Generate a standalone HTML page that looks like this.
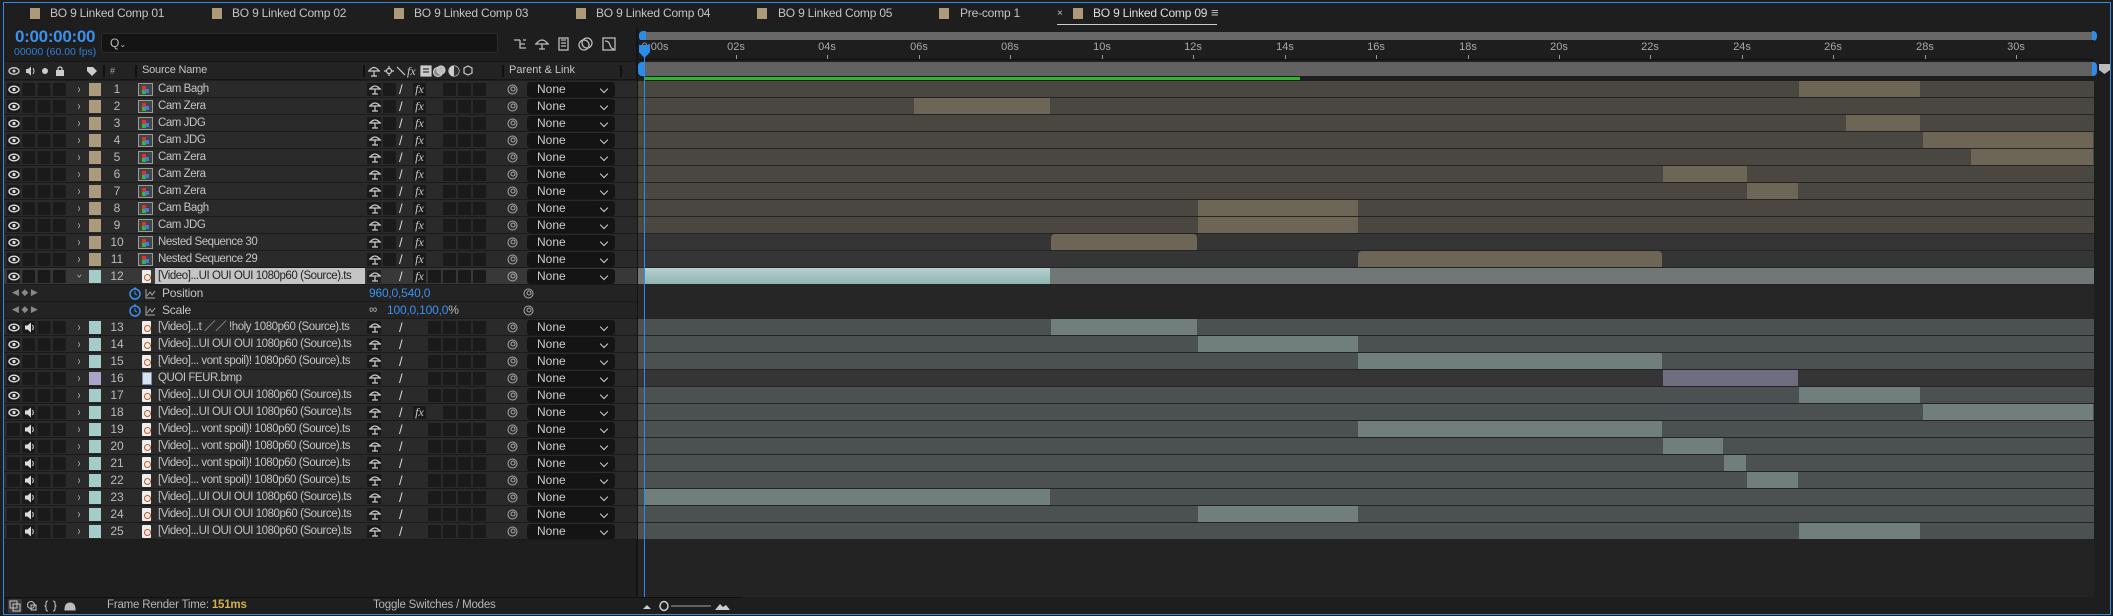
<!DOCTYPE html>
<html><head><meta charset="utf-8"><style>
*{margin:0;padding:0;box-sizing:border-box}
body{width:2113px;height:616px;background:#1e1e1e;position:relative;overflow:hidden;font-family:"Liberation Sans",sans-serif;color:#bdbdbd;font-size:12px}
.a{position:absolute}
.tab{position:absolute;top:6px;font-size:12px;color:#c4c4c4;letter-spacing:-0.2px;white-space:nowrap}
.tsq{position:absolute;top:8px;width:10px;height:11px;background:#ac9a7a}
.r{position:absolute;left:0;width:2094px;height:17px}
.L{position:absolute;left:4px;width:633px;height:17px;background:#2a2a2a;border-bottom:1px solid #1a1a1a}
.T{position:absolute;left:638px;width:1456px;height:17px;border-bottom:1px solid #242424}
.tan{background:#4a4640}.tl{background:#4b5151}.dk{background:#353535}
.b{position:absolute;top:0;height:16px}
.tb{background:#6d6555}.eb{background:#707e7c}
.cells{position:absolute;left:3px;top:2px;width:59px;height:13px;background:linear-gradient(90deg,#1a1a1a 13px,transparent 13px) 0 0/15.3px 13px repeat-x}
.sw3{position:absolute;left:439px;top:2px;width:43px;height:13px;background:linear-gradient(90deg,#1a1a1a 13px,transparent 13px) 0 0/15px 13px repeat-x}
.sw4{position:absolute;left:424px;top:2px;width:58px;height:13px;background:linear-gradient(90deg,#1a1a1a 13px,transparent 13px) 0 0/15px 13px repeat-x}
.cl{position:absolute;top:2px;width:13px;height:13px;background:#1a1a1a;border-radius:1px}
.eye{position:absolute;left:4px;top:4px}
.spk{position:absolute;left:20px;top:3px}
.ar{position:absolute;left:73px;top:1px;font-size:12px;color:#bbb;transform:scaleX(0.7)}
.lb{position:absolute;left:85px;top:2px;width:12px;height:13px}
.lt{background:#ab9a7b}.le{background:#a5ccc8}.lp{background:#a8a5c8}
.n{position:absolute;left:102px;width:22px;text-align:center;top:1px;color:#bbb}
.ci{position:absolute;left:134px;top:2px;width:15px;height:13px;border:1px solid #9a9a9a;background:#444}
.ci:before{content:"";position:absolute;left:3px;top:2px;width:4px;height:4px;background:#d33}
.ci:after{content:"";position:absolute;left:6px;top:5px;width:4px;height:4px;background:#3a7de0;box-shadow:-3px 1px 0 #3b3}
.vi{position:absolute;left:138px;top:2px;width:9px;height:13px;background:#eee;border-radius:1px}
.vi:after{content:"";position:absolute;left:2px;top:4px;width:5px;height:5px;border-radius:50%;border:1.5px solid #c75a28}
.bi{position:absolute;left:138px;top:2px;width:10px;height:13px;background:#d8e4ee;border:1px solid #7a8fb0}
.nm{position:absolute;left:154px;top:0;line-height:17px;font-size:11.5px;letter-spacing:-0.45px;white-space:nowrap;color:#c4c4c4}
.shy{position:absolute;left:363px;top:2px;width:14px;height:13px;background:#1a1a1a}
.sl{position:absolute;left:395px;top:1px;color:#ddd;font-size:13px}
.fx{position:absolute;left:409px;top:2px;width:13px;height:13px;background:#1a1a1a;color:#ccc;font-style:italic;font-family:"Liberation Serif",serif;font-size:12px;line-height:12px;text-align:center}
.spi{position:absolute;left:503px;top:3px}
.dd{position:absolute;left:523px;top:1px;width:88px;height:15px;background:#141414;border-radius:3px;color:#ccc;padding-left:10px;line-height:15px}
.dd:after{content:"";position:absolute;right:8px;top:4px;width:5px;height:5px;border-right:1.5px solid #ccc;border-bottom:1.5px solid #ccc;transform:rotate(45deg)}
.rl{position:absolute;top:41px;font-size:11px;color:#aaa;transform:translateX(-50%)}
.tk{position:absolute;top:55px;width:1px;height:4px;background:#999}
</style></head><body>
<div class="a" style="left:0;top:0;width:2113px;height:2px;background:#1e1e1e"></div>
<div class="a" style="left:3px;top:2px;width:2108px;height:1px;background:#2d8ceb"></div>
<div class="a" style="left:3px;top:2px;width:1px;height:613px;background:#2d8ceb"></div>
<div class="a" style="left:3px;top:614px;width:2108px;height:1px;background:#2d8ceb"></div>
<div class="a" style="left:2110px;top:2px;width:1px;height:613px;background:#2d8ceb"></div>

<div class="tsq" style="left:30px"></div><div class="tab" style="left:50px">BO 9 Linked Comp 01</div>
<div class="tsq" style="left:212px"></div><div class="tab" style="left:232px">BO 9 Linked Comp 02</div>
<div class="tsq" style="left:394px"></div><div class="tab" style="left:414px">BO 9 Linked Comp 03</div>
<div class="tsq" style="left:576px"></div><div class="tab" style="left:596px">BO 9 Linked Comp 04</div>
<div class="tsq" style="left:757px"></div><div class="tab" style="left:778px">BO 9 Linked Comp 05</div>
<div class="tsq" style="left:939px"></div><div class="tab" style="left:960px">Pre-comp 1</div>
<div class="tab" style="left:1057px;font-size:10px;top:8px">×</div>
<div class="tsq" style="left:1073px"></div><div class="tab" style="left:1093px;color:#ddd">BO 9 Linked Comp 09</div>
<div class="tab" style="left:1211px;font-size:13px;top:5px">≡</div>
<div class="a" style="left:1057px;top:24px;width:160px;height:1px;background:#ccc"></div>

<div class="a" style="left:15px;top:27px;font-size:17px;font-weight:bold;color:#3b91ee;letter-spacing:-0.3px">0:00:00:00</div>
<div class="a" style="left:14px;top:46px;font-size:10.5px;color:#2f7fd6">00000 (60.00 fps)</div>
<div class="a" style="left:101px;top:33px;width:397px;height:20px;background:#141414;border:1px solid #2c2c2c;border-radius:3px"></div>
<div class="a" style="left:110px;top:36px;font-size:12px;color:#bbb">Q<span style="font-size:8px">⌄</span></div>
<svg class="a" style="left:512px;top:36px" width="120" height="16" viewBox="0 0 120 16" fill="none" stroke="#bbb" stroke-width="1.3">
<path d="M2 4h6M8 4v8h6M8 8h5M11 4h3"/>
<path d="M24 8q6-8 12 0zM23 8h14M30 8v5M27 13h6"/>
<rect x="47" y="2" width="9" height="12"/><path d="M49 4h5M49 7h5M49 10h5"/>
<circle cx="72" cy="9" r="5"/><circle cx="75" cy="7" r="5"/>
<rect x="91" y="2" width="12" height="12"/><path d="M93 5q4 0 5 4t4 4"/>
</svg>

<div class="a" style="left:4px;top:61px;width:633px;height:19px;background:#232323;border-top:1px solid #171717;border-bottom:1px solid #171717"></div>
<svg class="a" style="left:8px;top:66px" width="90" height="12" fill="#ccc" stroke="#ccc">
<ellipse cx="6" cy="5" rx="5" ry="3.3" fill="none" stroke-width="1.3"/><circle cx="6" cy="5" r="1.5" stroke="none"/>
<path d="M18 3h2l3-2.5v9L20 7h-2z" stroke="none"/><path d="M25 2q2 3 0 6" fill="none"/>
<circle cx="37" cy="5" r="3" stroke="none"/>
<rect x="48" y="4" width="8" height="6" stroke="none"/><path d="M50 4v-2q2-2 4 0v2" fill="none" stroke-width="1.2"/>
<path d="M79 1h6l4 4-5 5-5-5z" stroke="none"/>
</svg>
<div class="a" style="left:103px;top:65px;width:2px;height:12px;background:#111"></div>
<div class="a" style="left:110px;top:66px;font-size:9px;color:#aaa">#</div>
<div class="a" style="left:135px;top:65px;width:2px;height:12px;background:#111"></div>
<div class="a" style="left:142px;top:64px;font-size:11px;color:#c4c4c4;letter-spacing:-0.2px">Source Name</div>
<div class="a" style="left:363px;top:65px;width:2px;height:12px;background:#111"></div>
<svg class="a" style="left:368px;top:65px" width="120" height="13" fill="none" stroke="#ccc" stroke-width="1.2">
<path d="M1 6q5-7 10 0zM0 6h12M6 6v5M3 11h6"/>
<circle cx="21" cy="6" r="2.5"/><path d="M21 1v2M21 9v2M16 6h2M24 6h2"/>
<path d="M29 2l8 8"/>
<text x="39" y="10" fill="#ccc" stroke="none" font-size="12" font-style="italic" font-family="Liberation Serif">fx</text>
<rect x="53" y="1" width="10" height="10" fill="#ccc"/><path d="M55 4h6M55 7h6" stroke="#333"/>
<circle cx="70" cy="7" r="4.5" fill="#888"/><circle cx="73" cy="5" r="4" fill="#bbb"/>
<circle cx="86" cy="6" r="5" fill="#ccc"/><path d="M86 1a5 5 0 0 1 0 10z" fill="#333" stroke="none"/>
<path d="M96 3l4-2 4 2v5l-4 2-4-2z"/>
</svg>
<div class="a" style="left:502px;top:65px;width:2px;height:12px;background:#111"></div>
<div class="a" style="left:509px;top:64px;font-size:11px;color:#c4c4c4">Parent &amp; Link</div>
<div class="a" style="left:620px;top:65px;width:2px;height:12px;background:#111"></div>

<div class="a" style="left:636px;top:28px;width:2px;height:569px;background:#141414"></div>

<div class="a" style="left:644px;top:32px;width:1450px;height:8px;background:#686868"></div>
<div class="a" style="left:639px;top:31px;width:7px;height:10px;background:#2d8ceb;border-radius:4px 0 0 4px"></div>
<div class="a" style="left:2092px;top:31px;width:5px;height:10px;background:#2d8ceb;border-radius:0 4px 4px 0"></div>
<div class="a" style="left:638px;top:40px;width:1456px;height:20px;background:#1e1e1e;border-bottom:1px solid #111"></div>
<div class="rl" style="left:655px">0:00s</div>
<div class="rl" style="left:736px">02s</div><div class="tk" style="left:736px"></div>
<div class="rl" style="left:827px">04s</div><div class="tk" style="left:827px"></div>
<div class="rl" style="left:919px">06s</div><div class="tk" style="left:919px"></div>
<div class="rl" style="left:1010px">08s</div><div class="tk" style="left:1010px"></div>
<div class="rl" style="left:1102px">10s</div><div class="tk" style="left:1102px"></div>
<div class="rl" style="left:1193px">12s</div><div class="tk" style="left:1193px"></div>
<div class="rl" style="left:1285px">14s</div><div class="tk" style="left:1285px"></div>
<div class="rl" style="left:1376px">16s</div><div class="tk" style="left:1376px"></div>
<div class="rl" style="left:1468px">18s</div><div class="tk" style="left:1468px"></div>
<div class="rl" style="left:1559px">20s</div><div class="tk" style="left:1559px"></div>
<div class="rl" style="left:1650px">22s</div><div class="tk" style="left:1650px"></div>
<div class="rl" style="left:1742px">24s</div><div class="tk" style="left:1742px"></div>
<div class="rl" style="left:1833px">26s</div><div class="tk" style="left:1833px"></div>
<div class="rl" style="left:1925px">28s</div><div class="tk" style="left:1925px"></div>
<div class="rl" style="left:2016px">30s</div><div class="tk" style="left:2016px"></div>
<div class="a" style="left:638px;top:61px;width:1456px;height:19px;background:#1e1e1e"></div>
<div class="a" style="left:644px;top:62px;width:1450px;height:14px;background:#626262"></div>
<div class="a" style="left:638px;top:62px;width:6px;height:14px;background:#2d8ceb;border-radius:4px 0 0 4px"></div>
<div class="a" style="left:2092px;top:62px;width:5px;height:14px;background:#2d8ceb;border-radius:0 4px 4px 0"></div>
<div class="a" style="left:644px;top:77px;width:656px;height:3px;background:#2db52d"></div>
<div class="a" style="left:2099px;top:64px;width:11px;height:10px;background:#bbb;clip-path:polygon(0 0,100% 0,100% 60%,50% 100%,0 60%)"></div>

<div class="r" style="top:81px"><div class="L"><div class="cells"></div><svg class="eye" width="12" height="9"><ellipse cx="6" cy="4.5" rx="5" ry="3.3" fill="none" stroke="#ddd" stroke-width="1.4"/><circle cx="6" cy="4.5" r="1.6" fill="#ddd"/></svg><span class="ar">›</span><i class="lb lt"></i><span class="n">1</span><i class="ci"></i><span class="nm">Cam Bagh</span><i class="shy"></i><i class="cl" style="left:379px"></i><span class="sl">/</span><i class="fx">fx</i><i class="sw3"></i><svg class="spi" width="11" height="11"><circle cx="5.5" cy="5.5" r="4.5" fill="none" stroke="#aaa"/><circle cx="6" cy="5" r="2" fill="none" stroke="#aaa"/></svg><div class="dd">None</div></div><div class="T tan"><i class="b tb" style="left:1161px;width:121px"></i></div></div>
<div class="r" style="top:98px"><div class="L"><div class="cells"></div><svg class="eye" width="12" height="9"><ellipse cx="6" cy="4.5" rx="5" ry="3.3" fill="none" stroke="#ddd" stroke-width="1.4"/><circle cx="6" cy="4.5" r="1.6" fill="#ddd"/></svg><span class="ar">›</span><i class="lb lt"></i><span class="n">2</span><i class="ci"></i><span class="nm">Cam Zera</span><i class="shy"></i><i class="cl" style="left:379px"></i><span class="sl">/</span><i class="fx">fx</i><i class="sw3"></i><svg class="spi" width="11" height="11"><circle cx="5.5" cy="5.5" r="4.5" fill="none" stroke="#aaa"/><circle cx="6" cy="5" r="2" fill="none" stroke="#aaa"/></svg><div class="dd">None</div></div><div class="T tan"><i class="b tb" style="left:276px;width:136px"></i></div></div>
<div class="r" style="top:115px"><div class="L"><div class="cells"></div><svg class="eye" width="12" height="9"><ellipse cx="6" cy="4.5" rx="5" ry="3.3" fill="none" stroke="#ddd" stroke-width="1.4"/><circle cx="6" cy="4.5" r="1.6" fill="#ddd"/></svg><span class="ar">›</span><i class="lb lt"></i><span class="n">3</span><i class="ci"></i><span class="nm">Cam JDG</span><i class="shy"></i><i class="cl" style="left:379px"></i><span class="sl">/</span><i class="fx">fx</i><i class="sw3"></i><svg class="spi" width="11" height="11"><circle cx="5.5" cy="5.5" r="4.5" fill="none" stroke="#aaa"/><circle cx="6" cy="5" r="2" fill="none" stroke="#aaa"/></svg><div class="dd">None</div></div><div class="T tan"><i class="b tb" style="left:1208px;width:74px"></i></div></div>
<div class="r" style="top:132px"><div class="L"><div class="cells"></div><svg class="eye" width="12" height="9"><ellipse cx="6" cy="4.5" rx="5" ry="3.3" fill="none" stroke="#ddd" stroke-width="1.4"/><circle cx="6" cy="4.5" r="1.6" fill="#ddd"/></svg><span class="ar">›</span><i class="lb lt"></i><span class="n">4</span><i class="ci"></i><span class="nm">Cam JDG</span><i class="shy"></i><i class="cl" style="left:379px"></i><span class="sl">/</span><i class="fx">fx</i><i class="sw3"></i><svg class="spi" width="11" height="11"><circle cx="5.5" cy="5.5" r="4.5" fill="none" stroke="#aaa"/><circle cx="6" cy="5" r="2" fill="none" stroke="#aaa"/></svg><div class="dd">None</div></div><div class="T tan"><i class="b tb" style="left:1285px;width:170px"></i></div></div>
<div class="r" style="top:149px"><div class="L"><div class="cells"></div><svg class="eye" width="12" height="9"><ellipse cx="6" cy="4.5" rx="5" ry="3.3" fill="none" stroke="#ddd" stroke-width="1.4"/><circle cx="6" cy="4.5" r="1.6" fill="#ddd"/></svg><span class="ar">›</span><i class="lb lt"></i><span class="n">5</span><i class="ci"></i><span class="nm">Cam Zera</span><i class="shy"></i><i class="cl" style="left:379px"></i><span class="sl">/</span><i class="fx">fx</i><i class="sw3"></i><svg class="spi" width="11" height="11"><circle cx="5.5" cy="5.5" r="4.5" fill="none" stroke="#aaa"/><circle cx="6" cy="5" r="2" fill="none" stroke="#aaa"/></svg><div class="dd">None</div></div><div class="T tan"><i class="b tb" style="left:1333px;width:122px"></i></div></div>
<div class="r" style="top:166px"><div class="L"><div class="cells"></div><svg class="eye" width="12" height="9"><ellipse cx="6" cy="4.5" rx="5" ry="3.3" fill="none" stroke="#ddd" stroke-width="1.4"/><circle cx="6" cy="4.5" r="1.6" fill="#ddd"/></svg><span class="ar">›</span><i class="lb lt"></i><span class="n">6</span><i class="ci"></i><span class="nm">Cam Zera</span><i class="shy"></i><i class="cl" style="left:379px"></i><span class="sl">/</span><i class="fx">fx</i><i class="sw3"></i><svg class="spi" width="11" height="11"><circle cx="5.5" cy="5.5" r="4.5" fill="none" stroke="#aaa"/><circle cx="6" cy="5" r="2" fill="none" stroke="#aaa"/></svg><div class="dd">None</div></div><div class="T tan"><i class="b tb" style="left:1025px;width:84px"></i></div></div>
<div class="r" style="top:183px"><div class="L"><div class="cells"></div><svg class="eye" width="12" height="9"><ellipse cx="6" cy="4.5" rx="5" ry="3.3" fill="none" stroke="#ddd" stroke-width="1.4"/><circle cx="6" cy="4.5" r="1.6" fill="#ddd"/></svg><span class="ar">›</span><i class="lb lt"></i><span class="n">7</span><i class="ci"></i><span class="nm">Cam Zera</span><i class="shy"></i><i class="cl" style="left:379px"></i><span class="sl">/</span><i class="fx">fx</i><i class="sw3"></i><svg class="spi" width="11" height="11"><circle cx="5.5" cy="5.5" r="4.5" fill="none" stroke="#aaa"/><circle cx="6" cy="5" r="2" fill="none" stroke="#aaa"/></svg><div class="dd">None</div></div><div class="T tan"><i class="b tb" style="left:1109px;width:51px"></i></div></div>
<div class="r" style="top:200px"><div class="L"><div class="cells"></div><svg class="eye" width="12" height="9"><ellipse cx="6" cy="4.5" rx="5" ry="3.3" fill="none" stroke="#ddd" stroke-width="1.4"/><circle cx="6" cy="4.5" r="1.6" fill="#ddd"/></svg><span class="ar">›</span><i class="lb lt"></i><span class="n">8</span><i class="ci"></i><span class="nm">Cam Bagh</span><i class="shy"></i><i class="cl" style="left:379px"></i><span class="sl">/</span><i class="fx">fx</i><i class="sw3"></i><svg class="spi" width="11" height="11"><circle cx="5.5" cy="5.5" r="4.5" fill="none" stroke="#aaa"/><circle cx="6" cy="5" r="2" fill="none" stroke="#aaa"/></svg><div class="dd">None</div></div><div class="T tan"><i class="b tb" style="left:560px;width:160px"></i></div></div>
<div class="r" style="top:217px"><div class="L"><div class="cells"></div><svg class="eye" width="12" height="9"><ellipse cx="6" cy="4.5" rx="5" ry="3.3" fill="none" stroke="#ddd" stroke-width="1.4"/><circle cx="6" cy="4.5" r="1.6" fill="#ddd"/></svg><span class="ar">›</span><i class="lb lt"></i><span class="n">9</span><i class="ci"></i><span class="nm">Cam JDG</span><i class="shy"></i><i class="cl" style="left:379px"></i><span class="sl">/</span><i class="fx">fx</i><i class="sw3"></i><svg class="spi" width="11" height="11"><circle cx="5.5" cy="5.5" r="4.5" fill="none" stroke="#aaa"/><circle cx="6" cy="5" r="2" fill="none" stroke="#aaa"/></svg><div class="dd">None</div></div><div class="T tan"><i class="b tb" style="left:560px;width:160px"></i></div></div>
<div class="r" style="top:234px"><div class="L"><div class="cells"></div><svg class="eye" width="12" height="9"><ellipse cx="6" cy="4.5" rx="5" ry="3.3" fill="none" stroke="#ddd" stroke-width="1.4"/><circle cx="6" cy="4.5" r="1.6" fill="#ddd"/></svg><span class="ar">›</span><i class="lb lt"></i><span class="n">10</span><i class="ci"></i><span class="nm">Nested Sequence 30</span><i class="shy"></i><i class="cl" style="left:379px"></i><span class="sl">/</span><i class="fx">fx</i><i class="sw3"></i><svg class="spi" width="11" height="11"><circle cx="5.5" cy="5.5" r="4.5" fill="none" stroke="#aaa"/><circle cx="6" cy="5" r="2" fill="none" stroke="#aaa"/></svg><div class="dd">None</div></div><div class="T dk"><i class="b tb" style="left:413px;width:146px;border-radius:4px 4px 0 0"></i></div></div>
<div class="r" style="top:251px"><div class="L"><div class="cells"></div><svg class="eye" width="12" height="9"><ellipse cx="6" cy="4.5" rx="5" ry="3.3" fill="none" stroke="#ddd" stroke-width="1.4"/><circle cx="6" cy="4.5" r="1.6" fill="#ddd"/></svg><span class="ar">›</span><i class="lb lt"></i><span class="n">11</span><i class="ci"></i><span class="nm">Nested Sequence 29</span><i class="shy"></i><i class="cl" style="left:379px"></i><span class="sl">/</span><i class="fx">fx</i><i class="sw3"></i><svg class="spi" width="11" height="11"><circle cx="5.5" cy="5.5" r="4.5" fill="none" stroke="#aaa"/><circle cx="6" cy="5" r="2" fill="none" stroke="#aaa"/></svg><div class="dd">None</div></div><div class="T dk"><i class="b tb" style="left:720px;width:304px;border-radius:4px 4px 0 0"></i></div></div>
<div class="r" style="top:268px"><div class="L" style="background:#383838"><div class="cells"></div><svg class="eye" width="12" height="9"><ellipse cx="6" cy="4.5" rx="5" ry="3.3" fill="none" stroke="#ddd" stroke-width="1.4"/><circle cx="6" cy="4.5" r="1.6" fill="#ddd"/></svg><span class="ar" style="transform:rotate(90deg) scaleY(0.8);left:74px">›</span><i class="lb le"></i><span class="n">12</span><i class="vi"></i><span class="a" style="left:151px;top:0;width:210px;height:16px;background:#c5c5c5"></span><span class="nm" style="color:#222">[Video]...UI OUI OUI 1080p60 (Source).ts</span><i class="shy" style="background:#222"></i><span class="sl">/</span><i class="fx">fx</i><i class="sw4"></i><svg class="spi" width="11" height="11"><circle cx="5.5" cy="5.5" r="4.5" fill="none" stroke="#aaa"/><circle cx="6" cy="5" r="2" fill="none" stroke="#aaa"/></svg><div class="dd">None</div></div><div class="T" style="background:#717777"><i class="b" style="left:6px;width:406px;background:linear-gradient(#b4d2cf,#8fb3b0)"></i></div></div>
<div class="r" style="top:285px"><div class="L" style="background:#232323"><span class="a" style="left:8px;top:2px;font-size:9px;color:#888">◀ ◆ ▶</span><svg class="a" style="left:125px;top:2px" width="30" height="13"><circle cx="6" cy="7" r="5" fill="none" stroke="#3b91ee" stroke-width="1.5"/><path d="M6 4v3l2 1M5 1h2" stroke="#3b91ee" fill="none"/><path d="M17 2v9h9M18 9l3-4 2 3 3-4" stroke="#aaa" fill="none"/></svg><span class="nm" style="left:158px;font-size:12px;letter-spacing:-0.2px">Position</span><span class="nm" style="left:365px;color:#3b91ee;font-size:12px;letter-spacing:-0.2px">960,0,540,0</span><svg class="a" style="left:519px;top:3px" width="11" height="11"><circle cx="5.5" cy="5.5" r="4.5" fill="none" stroke="#aaa"/><circle cx="6" cy="5" r="2" fill="none" stroke="#aaa"/></svg></div><div class="T" style="background:#262626"></div></div>
<div class="r" style="top:302px"><div class="L" style="background:#232323"><span class="a" style="left:8px;top:2px;font-size:9px;color:#888">◀ ◆ ▶</span><svg class="a" style="left:125px;top:2px" width="30" height="13"><circle cx="6" cy="7" r="5" fill="none" stroke="#3b91ee" stroke-width="1.5"/><path d="M6 4v3l2 1M5 1h2" stroke="#3b91ee" fill="none"/><path d="M17 2v9h9M18 9l3-4 2 3 3-4" stroke="#aaa" fill="none"/></svg><span class="nm" style="left:158px;font-size:12px;letter-spacing:-0.2px">Scale</span><span class="nm" style="left:365px;color:#bbb">∞</span><span class="nm" style="left:383px;color:#3b91ee;font-size:12px;letter-spacing:-0.2px">100,0,100,0<span style="color:#bbb">%</span></span><svg class="a" style="left:519px;top:3px" width="11" height="11"><circle cx="5.5" cy="5.5" r="4.5" fill="none" stroke="#aaa"/><circle cx="6" cy="5" r="2" fill="none" stroke="#aaa"/></svg></div><div class="T" style="background:#262626"></div></div>

<div class="r" style="top:319px"><div class="L"><div class="cells"></div><svg class="eye" width="12" height="9"><ellipse cx="6" cy="4.5" rx="5" ry="3.3" fill="none" stroke="#ddd" stroke-width="1.4"/><circle cx="6" cy="4.5" r="1.6" fill="#ddd"/></svg><svg class="spk" width="12" height="11"><path d="M1 3.5h2.5l3.5-3v10l-3.5-3H1z" fill="#ddd"/><path d="M8.5 3q1.5 2.5 0 5" stroke="#ddd" fill="none"/></svg><span class="ar">›</span><i class="lb le"></i><span class="n">13</span><i class="vi"></i><span class="nm">[Video]...t ／／ !holy 1080p60 (Source).ts</span><i class="shy"></i><span class="sl">/</span><i class="sw4"></i><svg class="spi" width="11" height="11"><circle cx="5.5" cy="5.5" r="4.5" fill="none" stroke="#aaa"/><circle cx="6" cy="5" r="2" fill="none" stroke="#aaa"/></svg><div class="dd">None</div></div><div class="T tl"><i class="b eb" style="left:413px;width:146px"></i></div></div>
<div class="r" style="top:336px"><div class="L"><div class="cells"></div><svg class="eye" width="12" height="9"><ellipse cx="6" cy="4.5" rx="5" ry="3.3" fill="none" stroke="#ddd" stroke-width="1.4"/><circle cx="6" cy="4.5" r="1.6" fill="#ddd"/></svg><span class="ar">›</span><i class="lb le"></i><span class="n">14</span><i class="vi"></i><span class="nm">[Video]...UI OUI OUI 1080p60 (Source).ts</span><i class="shy"></i><span class="sl">/</span><i class="sw4"></i><svg class="spi" width="11" height="11"><circle cx="5.5" cy="5.5" r="4.5" fill="none" stroke="#aaa"/><circle cx="6" cy="5" r="2" fill="none" stroke="#aaa"/></svg><div class="dd">None</div></div><div class="T tl"><i class="b eb" style="left:560px;width:160px"></i></div></div>
<div class="r" style="top:353px"><div class="L"><div class="cells"></div><svg class="eye" width="12" height="9"><ellipse cx="6" cy="4.5" rx="5" ry="3.3" fill="none" stroke="#ddd" stroke-width="1.4"/><circle cx="6" cy="4.5" r="1.6" fill="#ddd"/></svg><span class="ar">›</span><i class="lb le"></i><span class="n">15</span><i class="vi"></i><span class="nm">[Video]... vont spoil)! 1080p60 (Source).ts</span><i class="shy"></i><span class="sl">/</span><i class="sw4"></i><svg class="spi" width="11" height="11"><circle cx="5.5" cy="5.5" r="4.5" fill="none" stroke="#aaa"/><circle cx="6" cy="5" r="2" fill="none" stroke="#aaa"/></svg><div class="dd">None</div></div><div class="T tl"><i class="b eb" style="left:720px;width:304px"></i></div></div>
<div class="r" style="top:370px"><div class="L"><div class="cells"></div><svg class="eye" width="12" height="9"><ellipse cx="6" cy="4.5" rx="5" ry="3.3" fill="none" stroke="#ddd" stroke-width="1.4"/><circle cx="6" cy="4.5" r="1.6" fill="#ddd"/></svg><span class="ar">›</span><i class="lb lp"></i><span class="n">16</span><i class="bi"></i><span class="nm">QUOI FEUR.bmp</span><i class="shy"></i><span class="sl">/</span><i class="sw4"></i><svg class="spi" width="11" height="11"><circle cx="5.5" cy="5.5" r="4.5" fill="none" stroke="#aaa"/><circle cx="6" cy="5" r="2" fill="none" stroke="#aaa"/></svg><div class="dd">None</div></div><div class="T dk"><i class="b" style="left:1025px;width:135px;background:#6f6e80"></i></div></div>
<div class="r" style="top:387px"><div class="L"><div class="cells"></div><svg class="eye" width="12" height="9"><ellipse cx="6" cy="4.5" rx="5" ry="3.3" fill="none" stroke="#ddd" stroke-width="1.4"/><circle cx="6" cy="4.5" r="1.6" fill="#ddd"/></svg><span class="ar">›</span><i class="lb le"></i><span class="n">17</span><i class="vi"></i><span class="nm">[Video]...UI OUI OUI 1080p60 (Source).ts</span><i class="shy"></i><span class="sl">/</span><i class="sw4"></i><svg class="spi" width="11" height="11"><circle cx="5.5" cy="5.5" r="4.5" fill="none" stroke="#aaa"/><circle cx="6" cy="5" r="2" fill="none" stroke="#aaa"/></svg><div class="dd">None</div></div><div class="T tl"><i class="b eb" style="left:1161px;width:121px"></i></div></div>
<div class="r" style="top:404px"><div class="L"><div class="cells"></div><svg class="eye" width="12" height="9"><ellipse cx="6" cy="4.5" rx="5" ry="3.3" fill="none" stroke="#ddd" stroke-width="1.4"/><circle cx="6" cy="4.5" r="1.6" fill="#ddd"/></svg><svg class="spk" width="12" height="11"><path d="M1 3.5h2.5l3.5-3v10l-3.5-3H1z" fill="#ddd"/><path d="M8.5 3q1.5 2.5 0 5" stroke="#ddd" fill="none"/></svg><span class="ar">›</span><i class="lb le"></i><span class="n">18</span><i class="vi"></i><span class="nm">[Video]...UI OUI OUI 1080p60 (Source).ts</span><i class="shy"></i><span class="sl">/</span><i class="fx">fx</i><i class="sw3"></i><svg class="spi" width="11" height="11"><circle cx="5.5" cy="5.5" r="4.5" fill="none" stroke="#aaa"/><circle cx="6" cy="5" r="2" fill="none" stroke="#aaa"/></svg><div class="dd">None</div></div><div class="T tl"><i class="b eb" style="left:1285px;width:170px"></i></div></div>
<div class="r" style="top:421px"><div class="L"><div class="cells"></div><svg class="spk" width="12" height="11"><path d="M1 3.5h2.5l3.5-3v10l-3.5-3H1z" fill="#ddd"/><path d="M8.5 3q1.5 2.5 0 5" stroke="#ddd" fill="none"/></svg><span class="ar">›</span><i class="lb le"></i><span class="n">19</span><i class="vi"></i><span class="nm">[Video]... vont spoil)! 1080p60 (Source).ts</span><i class="shy"></i><span class="sl">/</span><i class="sw4"></i><svg class="spi" width="11" height="11"><circle cx="5.5" cy="5.5" r="4.5" fill="none" stroke="#aaa"/><circle cx="6" cy="5" r="2" fill="none" stroke="#aaa"/></svg><div class="dd">None</div></div><div class="T tl"><i class="b eb" style="left:720px;width:304px"></i></div></div>
<div class="r" style="top:438px"><div class="L"><div class="cells"></div><svg class="spk" width="12" height="11"><path d="M1 3.5h2.5l3.5-3v10l-3.5-3H1z" fill="#ddd"/><path d="M8.5 3q1.5 2.5 0 5" stroke="#ddd" fill="none"/></svg><span class="ar">›</span><i class="lb le"></i><span class="n">20</span><i class="vi"></i><span class="nm">[Video]... vont spoil)! 1080p60 (Source).ts</span><i class="shy"></i><span class="sl">/</span><i class="sw4"></i><svg class="spi" width="11" height="11"><circle cx="5.5" cy="5.5" r="4.5" fill="none" stroke="#aaa"/><circle cx="6" cy="5" r="2" fill="none" stroke="#aaa"/></svg><div class="dd">None</div></div><div class="T tl"><i class="b eb" style="left:1025px;width:60px"></i></div></div>
<div class="r" style="top:455px"><div class="L"><div class="cells"></div><svg class="spk" width="12" height="11"><path d="M1 3.5h2.5l3.5-3v10l-3.5-3H1z" fill="#ddd"/><path d="M8.5 3q1.5 2.5 0 5" stroke="#ddd" fill="none"/></svg><span class="ar">›</span><i class="lb le"></i><span class="n">21</span><i class="vi"></i><span class="nm">[Video]... vont spoil)! 1080p60 (Source).ts</span><i class="shy"></i><span class="sl">/</span><i class="sw4"></i><svg class="spi" width="11" height="11"><circle cx="5.5" cy="5.5" r="4.5" fill="none" stroke="#aaa"/><circle cx="6" cy="5" r="2" fill="none" stroke="#aaa"/></svg><div class="dd">None</div></div><div class="T tl"><i class="b eb" style="left:1086px;width:22px"></i></div></div>
<div class="r" style="top:472px"><div class="L"><div class="cells"></div><svg class="spk" width="12" height="11"><path d="M1 3.5h2.5l3.5-3v10l-3.5-3H1z" fill="#ddd"/><path d="M8.5 3q1.5 2.5 0 5" stroke="#ddd" fill="none"/></svg><span class="ar">›</span><i class="lb le"></i><span class="n">22</span><i class="vi"></i><span class="nm">[Video]... vont spoil)! 1080p60 (Source).ts</span><i class="shy"></i><span class="sl">/</span><i class="sw4"></i><svg class="spi" width="11" height="11"><circle cx="5.5" cy="5.5" r="4.5" fill="none" stroke="#aaa"/><circle cx="6" cy="5" r="2" fill="none" stroke="#aaa"/></svg><div class="dd">None</div></div><div class="T tl"><i class="b eb" style="left:1109px;width:51px"></i></div></div>
<div class="r" style="top:489px"><div class="L"><div class="cells"></div><svg class="spk" width="12" height="11"><path d="M1 3.5h2.5l3.5-3v10l-3.5-3H1z" fill="#ddd"/><path d="M8.5 3q1.5 2.5 0 5" stroke="#ddd" fill="none"/></svg><span class="ar">›</span><i class="lb le"></i><span class="n">23</span><i class="vi"></i><span class="nm">[Video]...UI OUI OUI 1080p60 (Source).ts</span><i class="shy"></i><span class="sl">/</span><i class="sw4"></i><svg class="spi" width="11" height="11"><circle cx="5.5" cy="5.5" r="4.5" fill="none" stroke="#aaa"/><circle cx="6" cy="5" r="2" fill="none" stroke="#aaa"/></svg><div class="dd">None</div></div><div class="T tl"><i class="b eb" style="left:6px;width:406px"></i></div></div>
<div class="r" style="top:506px"><div class="L"><div class="cells"></div><svg class="spk" width="12" height="11"><path d="M1 3.5h2.5l3.5-3v10l-3.5-3H1z" fill="#ddd"/><path d="M8.5 3q1.5 2.5 0 5" stroke="#ddd" fill="none"/></svg><span class="ar">›</span><i class="lb le"></i><span class="n">24</span><i class="vi"></i><span class="nm">[Video]...UI OUI OUI 1080p60 (Source).ts</span><i class="shy"></i><span class="sl">/</span><i class="sw4"></i><svg class="spi" width="11" height="11"><circle cx="5.5" cy="5.5" r="4.5" fill="none" stroke="#aaa"/><circle cx="6" cy="5" r="2" fill="none" stroke="#aaa"/></svg><div class="dd">None</div></div><div class="T tl"><i class="b eb" style="left:560px;width:160px"></i></div></div>
<div class="r" style="top:523px"><div class="L"><div class="cells"></div><svg class="spk" width="12" height="11"><path d="M1 3.5h2.5l3.5-3v10l-3.5-3H1z" fill="#ddd"/><path d="M8.5 3q1.5 2.5 0 5" stroke="#ddd" fill="none"/></svg><span class="ar">›</span><i class="lb le"></i><span class="n">25</span><i class="vi"></i><span class="nm">[Video]...UI OUI OUI 1080p60 (Source).ts</span><i class="shy"></i><span class="sl">/</span><i class="sw4"></i><svg class="spi" width="11" height="11"><circle cx="5.5" cy="5.5" r="4.5" fill="none" stroke="#aaa"/><circle cx="6" cy="5" r="2" fill="none" stroke="#aaa"/></svg><div class="dd">None</div></div><div class="T tl"><i class="b eb" style="left:1161px;width:121px"></i></div></div>

<svg class="a" style="left:369px;top:81px" width="12" height="460">
<defs><path id="s" d="M1 6q5-6 10 0zM0 6h12M6 6v5M3 11h6" fill="none" stroke="#ccc" stroke-width="1.2"/></defs>
<use href="#s" y="2"/><use href="#s" y="19"/><use href="#s" y="36"/><use href="#s" y="53"/><use href="#s" y="70"/><use href="#s" y="87"/><use href="#s" y="104"/><use href="#s" y="121"/><use href="#s" y="138"/><use href="#s" y="155"/><use href="#s" y="172"/><use href="#s" y="189"/><use href="#s" y="240"/><use href="#s" y="257"/><use href="#s" y="274"/><use href="#s" y="291"/><use href="#s" y="308"/><use href="#s" y="325"/><use href="#s" y="342"/><use href="#s" y="359"/><use href="#s" y="376"/><use href="#s" y="393"/><use href="#s" y="410"/><use href="#s" y="427"/><use href="#s" y="444"/>
</svg>

<div class="a" style="left:638px;top:540px;width:1456px;height:57px;background:#232323"></div>

<div class="a" style="left:644px;top:50px;width:1px;height:547px;background:#2d8ceb"></div>
<div class="a" style="left:639px;top:45px;width:11px;height:13px;background:#2d8ceb;clip-path:polygon(0 0,100% 0,100% 55%,50% 100%,0 55%)"></div>

<div class="a" style="left:4px;top:597px;width:738px;height:17px;background:#1e1e1e;border-top:1px solid #111"></div>
<div class="a" style="left:8px;top:599px;width:14px;height:14px;background:#3a3a3a;border-radius:2px"></div>
<svg class="a" style="left:9px;top:600px" width="75" height="12" fill="none" stroke="#bbb" stroke-width="1.1">
<rect x="1" y="1" width="7" height="7"/><rect x="4" y="4" width="7" height="7"/>
<circle cx="22" cy="5" r="3.5"/><rect x="22" y="5" width="5" height="5"/>
<path d="M39 1q-2 0-2 2v2l-1 1 1 1v2q0 2 2 2M44 1q2 0 2 2v2l1 1-1 1v2q0 2-2 2"/>
<path d="M56 10q0-7 5-7t5 7z" fill="#bbb"/>
</svg>
<div class="a" style="left:107px;top:599px;font-size:11.5px;color:#b5b5b5;letter-spacing:-0.2px">Frame Render Time: <span style="color:#d4b04a;font-weight:bold">151ms</span></div>
<div class="a" style="left:373px;top:599px;font-size:11.5px;color:#b5b5b5;letter-spacing:-0.2px">Toggle Switches / Modes</div>
<svg class="a" style="left:642px;top:600px" width="100" height="12">
<path d="M1 9l4-4 4 4z" fill="#ccc"/><ellipse cx="22" cy="6" rx="4" ry="4.5" fill="none" stroke="#ccc" stroke-width="1.5"/>
<path d="M29 6h40" stroke="#777" stroke-width="1.5"/><path d="M73 10l5-6 3 3 3-2 4 5z" fill="#ccc"/>
</svg>
</body></html>
